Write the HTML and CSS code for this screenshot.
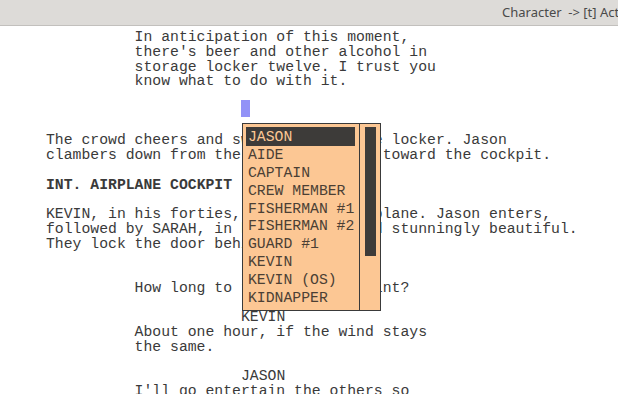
FILE: index.html
```html
<!DOCTYPE html>
<html>
<head>
<meta charset="utf-8">
<link rel="stylesheet" href="styles.css">
</head>
<body>
<div class="topbar">
  <div class="spacer"></div>
  <div class="hint">Character&nbsp;&nbsp;-&gt; [t] Action&nbsp;&nbsp;[Enter] Dialogue</div>
</div>
<div class="page">
  <div class="script">
    <div class="dlg">In anticipation of this moment,</div>
    <div class="dlg">there's beer and other alcohol in</div>
    <div class="dlg">storage locker twelve. I trust you</div>
    <div class="dlg">know what to do with it.</div>
    <div class="blank"></div>
    <div class="chr"><span class="cursor"></span></div>
    <div class="blank"></div>
    <div class="act">The crowd cheers and swarms around the locker. Jason</div>
    <div class="act">clambers down from the crowd and runs toward the cockpit.</div>
    <div class="blank"></div>
    <div class="act scene">INT. AIRPLANE COCKPIT</div>
    <div class="blank"></div>
    <div class="act">KEVIN, in his forties, is flying the plane. Jason enters,</div>
    <div class="act">followed by SARAH, in her twenties and stunningly beautiful.</div>
    <div class="act">They lock the door behind them.</div>
    <div class="blank"></div>
    <div class="chr">JASON</div>
    <div class="dlg">How long to the drop-off point?</div>
    <div class="blank"></div>
    <div class="chr">KEVIN</div>
    <div class="dlg">About one hour, if the wind stays</div>
    <div class="dlg">the same.</div>
    <div class="blank"></div>
    <div class="chr">JASON</div>
    <div class="dlg">I'll go entertain the others so</div>
  </div>
  <div class="popup">
    <ul class="list">
      <li class="item sel">JASON</li>
      <li class="item">AIDE</li>
      <li class="item">CAPTAIN</li>
      <li class="item">CREW MEMBER</li>
      <li class="item">FISHERMAN #1</li>
      <li class="item">FISHERMAN #2</li>
      <li class="item">GUARD #1</li>
      <li class="item">KEVIN</li>
      <li class="item">KEVIN (OS)</li>
      <li class="item">KIDNAPPER</li>
    </ul>
    <div class="scroll"><div class="thumb"></div></div>
  </div>
</div>
</body>
</html>
```
FILE: styles.css
```css
html, body {
  margin: 0;
  padding: 0;
  background: #ffffff;
  width: 618px;
  height: 394px;
  overflow: hidden;
}
.topbar {
  display: flex;
  height: 25px;
  background: #dddbd8;
  border-bottom: 1px solid #c2c0bd;
  overflow: hidden;
  white-space: nowrap;
}
.spacer {
  flex: 0 0 502px;
}
.hint {
  font-family: "Noto Sans", "DejaVu Sans", sans-serif;
  font-size: 13px;
  line-height: 25px;
  color: #4a4a4a;
}
.page {
  position: relative;
}
.script {
  padding: 4px 0 0 46px;
  font-family: "Liberation Mono", "Courier New", monospace;
  font-size: 14.78px;
  line-height: 14.75px;
  color: #3a3a3a;
}
.blank {
  height: 14.75px;
}
.act, .dlg, .chr {
  height: 14.75px;
  white-space: pre;
}
.dlg {
  margin-left: 10ch;
}
.chr {
  margin-left: 22ch;
}
.scene {
  font-weight: bold;
}
.cursor {
  display: inline-block;
  width: 9px;
  height: 17px;
  margin-top: -3.8px;
  margin-bottom: -1px;
  vertical-align: top;
  background: #9292f7;
}
.popup {
  position: absolute;
  left: 242px;
  top: 97px;
  width: 137px;
  height: 186px;
  display: flex;
  background: #fcc794;
  border: 1px solid #3a3a3a;
}
.list {
  list-style: none;
  margin: 0;
  padding: 3px 4px 0 3px;
  width: 109px;
  border-right: 1px solid #3a3a3a;
  font-family: "Liberation Mono", "Courier New", monospace;
  font-size: 14.78px;
  color: #4b3f34;
}
.item {
  height: 17.9px;
  line-height: 21.5px;
  padding-left: 2px;
  white-space: pre;
}
.item.sel {
  background: #3d3b39;
  color: #fcc794;
  height: 19px;
  line-height: 21.5px;
  margin-bottom: -1.1px;
}
.scroll {
  flex: 1;
  padding: 3px 0 0 5px;
}
.thumb {
  width: 11px;
  height: 129px;
  background: #3d3b39;
}
```
